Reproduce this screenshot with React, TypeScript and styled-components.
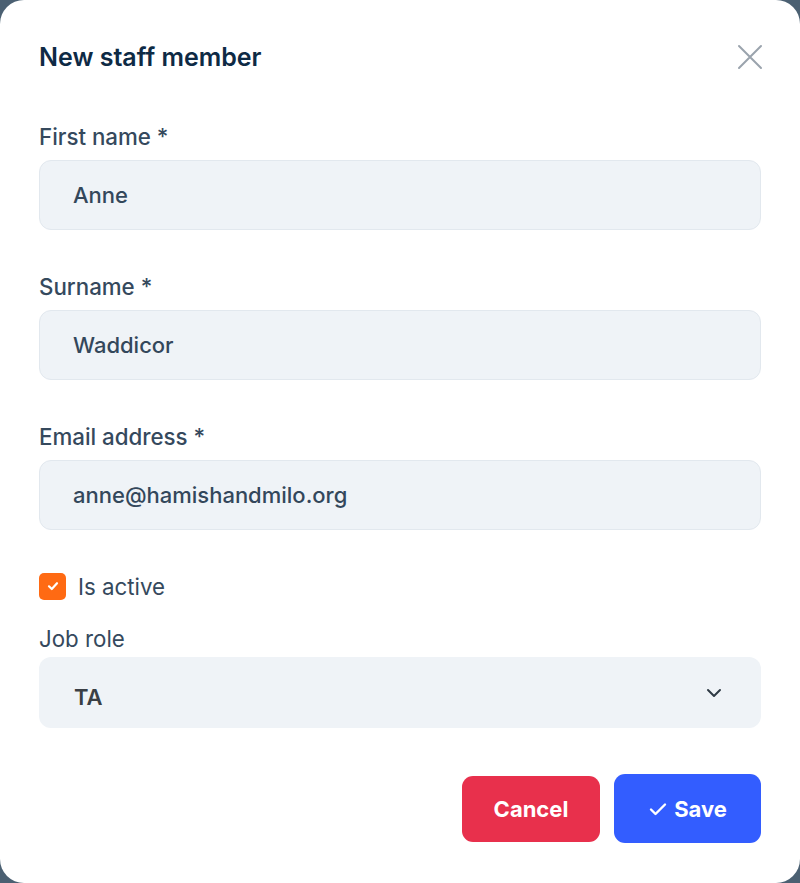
import styled, { createGlobalStyle } from "styled-components";

const GlobalStyle = createGlobalStyle`
  html, body {
    margin: 0;
    padding: 0;
    background: #4b6072;
  }
  body {
    font-family: Inter, "Noto Sans", sans-serif;
    -webkit-font-smoothing: antialiased;
  }
`;

const fields = [
  { label: "First name *", value: "Anne" },
  { label: "Surname *", value: "Waddicor" },
  { label: "Email address *", value: "anne@hamishandmilo.org" },
];

const App = () => {
  return (
    <>
      <GlobalStyle />
      <Modal>
        <Header>
          <Title>New staff member</Title>
          <CloseButton aria-label="Close">
            <svg width="26" height="26" viewBox="0 0 26 26" fill="none">
              <path d="M2 2L24 24M24 2L2 24" stroke="#9aa3ad" strokeWidth="2" strokeLinecap="round" />
            </svg>
          </CloseButton>
        </Header>

        <Form>
          {fields.map((field) => (
            <Field key={field.label}>
              <Label>{field.label}</Label>
              <Input value={field.value} readOnly />
            </Field>
          ))}

          <CheckRow>
            <CheckBox>
              <svg width="14" height="14" viewBox="0 0 14 14" fill="none">
                <path d="M3 7.3L5.8 10L11 4.2" stroke="#fff" strokeWidth="2.2" strokeLinecap="round" strokeLinejoin="round" />
              </svg>
            </CheckBox>
            <CheckLabel>Is active</CheckLabel>
          </CheckRow>

          <SelectField>
            <PlainLabel>Job role</PlainLabel>
            <Select>
              <SelectValue>TA</SelectValue>
              <svg width="18" height="18" viewBox="0 0 18 18" fill="none">
                <path d="M3 6L9 12L15 6" stroke="#2f3a45" strokeWidth="2" strokeLinecap="round" strokeLinejoin="round" />
              </svg>
            </Select>
          </SelectField>
        </Form>

        <Footer>
          <Button $variant="cancel">Cancel</Button>
          <Button $variant="save">
            <svg width="20" height="20" viewBox="0 0 20 20" fill="none">
              <path d="M3 10.5L7.5 15L17 5.5" stroke="#fff" strokeWidth="2.4" strokeLinecap="round" strokeLinejoin="round" />
            </svg>
            Save
          </Button>
        </Footer>
      </Modal>
    </>
  );
};

export default App;

const Modal = styled.div`
  width: 800px;
  height: 883px;
  box-sizing: border-box;
  background: #ffffff;
  border-radius: 24px;
  padding: 41px 39px 0 39px;
  display: flex;
  flex-direction: column;
`;

const Header = styled.div`
  display: flex;
  align-items: center;
  justify-content: space-between;
  height: 32px;
`;

const Title = styled.h1`
  margin: 0;
  font-size: 25px;
  line-height: 32px;
  font-weight: 600;
  color: #0e2a45;
`;

const CloseButton = styled.button`
  border: none;
  background: none;
  padding: 0;
  margin-right: -2px;
  display: flex;
  cursor: pointer;
`;

const Form = styled.div`
  display: flex;
  flex-direction: column;
  margin-top: 52px;
`;

const Field = styled.div`
  display: flex;
  flex-direction: column;
  gap: 11px;
  margin-bottom: 45px;

  &:nth-child(3) {
    margin-bottom: 42px;
  }
`;

const Label = styled.label`
  font-size: 22.3px;
  line-height: 24px;
  font-weight: 500;
  color: #35495d;
`;

const Input = styled.input`
  height: 70px;
  box-sizing: border-box;
  border: 1px solid #e2e8ee;
  background: #eff3f7;
  border-radius: 12px;
  padding: 0 33px;
  font-family: Inter, "Noto Sans", sans-serif;
  font-size: 22px;
  font-weight: 500;
  color: #33475b;
  outline: none;
`;

const CheckRow = styled.div`
  display: flex;
  align-items: center;
  gap: 12px;
  height: 28px;
`;

const CheckBox = styled.span`
  width: 27px;
  height: 27px;
  border-radius: 5px;
  background: #ff6a13;
  display: flex;
  align-items: center;
  justify-content: center;
`;

const CheckLabel = styled.span`
  font-size: 22.3px;
  font-weight: 400;
  color: #35495d;
`;

const SelectField = styled.div`
  display: flex;
  flex-direction: column;
  gap: 6px;
  margin-top: 27px;
`;

const PlainLabel = styled.label`
  font-size: 22.3px;
  line-height: 24px;
  font-weight: 400;
  color: #35495d;
`;

const Select = styled.div`
  height: 71px;
  box-sizing: border-box;
  background: #eff3f7;
  border-radius: 12px;
  padding: 0 38px 0 35px;
  display: flex;
  align-items: center;
  justify-content: space-between;
`;

const SelectValue = styled.span`
  font-size: 22px;
  font-weight: 600;
  color: #3a3f45;
  margin-top: 8px;
`;

const Footer = styled.div`
  display: flex;
  justify-content: flex-end;
  align-items: center;
  gap: 14px;
  margin-top: 46px;
`;

const Button = styled.button<{ $variant: "cancel" | "save" }>`
  border: none;
  border-radius: 11px;
  display: flex;
  align-items: center;
  justify-content: center;
  gap: 6px;
  font-family: Inter, "Noto Sans", sans-serif;
  font-size: 22px;
  font-weight: 700;
  color: #ffffff;
  cursor: pointer;
  width: ${({ $variant }) => ($variant === "cancel" ? "138px" : "147px")};
  height: ${({ $variant }) => ($variant === "cancel" ? "66px" : "69px")};
  background: ${({ $variant }) => ($variant === "cancel" ? "#e8304c" : "#335dff")};
`;
